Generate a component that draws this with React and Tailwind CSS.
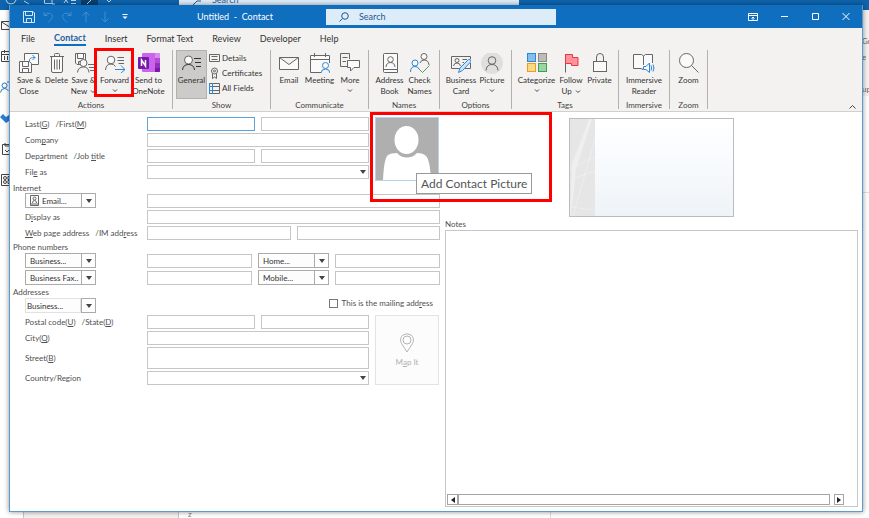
import React from "react";

const INK = "#666666";
const BLUE = "#2b88d8";

function Icon({ children, size = "h-5 w-5", box = "0 0 20 20", className = "" }) {
  return (
    <svg viewBox={box} className={`${size} shrink-0 ${className}`} fill="none" stroke={INK} strokeWidth="1" aria-hidden="true">
      {children}
    </svg>
  );
}

const icons = {
  saveClose: (
    <Icon>
      <path d="M5.5 7.500V.500H19.500V11.500H13" fill="#fafafa" />
      <path d="M10.500 8C10.500 5 12 4.500 16 4.500M13.500 2L16 4.500L13.500 7" stroke={BLUE} />
      <path d="M.500 8.500H10.500L12.500 10.500V19.500H.500Z" fill="#fafafa" />
      <path d="M3.500 8.500V13.500H9.500V8.500M3.500 19.500V15.500H9.500V19.500" />
    </Icon>
  ),
  trash: (
    <Icon>
      <path d="M4.500 3.500V18Q4.500 19.500 6 19.500H14Q15.500 19.500 15.500 18V3.500" fill="#fafafa" />
      <path d="M3 3.500H17M7.500 3.500V1.500Q7.500 .500 8.500 .500H11.500Q12.500 .500 12.500 1.500V3.500M7.500 6.500V16.500M10 6.500V16.500M12.500 6.500V16.500" />
    </Icon>
  ),
  saveNew: (
    <Icon>
      <path d="M1.500 .500H11.500V8M6 11.500H3L1.500 10V.500" fill="#fafafa" />
      <path d="M3.500 .500V5.500H9.500V.500M4.500 11.500V8.500H7" />
      <circle cx="9.500" cy="10" r="3.500" fill="#fafafa" />
      <path d="M3.500 19.500Q4 14 9.500 14Q14.500 14 15 19.500M14 11.500H20M15 14.500H20M16 17.500H20" />
    </Icon>
  ),
  forward: (
    <Icon>
      <circle cx="6" cy="7" r="3.800" fill="#fafafa" />
      <path d="M.500 17Q1 11 6 11Q9 11 10.500 13.500M12.500 4.500H19M12.500 7.500H19M13.500 10.500H19" />
      <path d="M10 16.500H20M16 12.500L20 16.500L16 20" stroke={BLUE} />
    </Icon>
  ),
  oneNote: (
    <Icon size="h-5 w-[22px]" box="0 0 22 20">
      <g stroke="none">
        <rect x="4" y="0" width="18" height="19" rx="1" fill="#ca64ea" />
        <path d="M17 0H21Q22 0 22 1V5H17Z" fill="#d98cf0" />
        <path d="M17 5H22V10H17Z" fill="#b14bd8" />
        <path d="M17 10H22V14.500H17Z" fill="#9332bf" />
        <path d="M17 14.500H22V18Q22 19 21 19H17Z" fill="#7719aa" />
        <rect x="0" y="4" width="11" height="12" rx="1" fill="#7719aa" />
      </g>
      <path d="M3.500 13V7L7.500 13V7" stroke="#fff" strokeWidth="1.500" />
    </Icon>
  ),
  general: (
    <Icon>
      <circle cx="6.500" cy="7" r="4" fill="#fafafa" />
      <path d="M.500 17Q1 11.500 6.500 11.500Q12 11.500 12.500 17M12 5.500H19M13 9.500H19M14 13.500H19" stroke="#333" />
    </Icon>
  ),
  envelope: (
    <Icon>
      <path d="M.500 4.500H19.500V16.500H.500ZM.500 4.500L10 11.500L19.500 4.500" fill="#fafafa" />
    </Icon>
  ),
  meeting: (
    <Icon>
      <path d="M.500 2.500H19.500V19.500H.500Z" fill="#fafafa" />
      <path d="M.500 6.500H19.500M4.500 0V4M15.500 0V4" />
      <path d="M11 20H20V10H11Z" fill="#f3f2f1" stroke="none" />
      <g stroke={BLUE}>
        <circle cx="15.500" cy="12.500" r="3" fill="#fafafa" />
        <path d="M11 20Q11.500 16 15.500 16Q19.500 16 20 20" />
      </g>
    </Icon>
  ),
  more: (
    <Icon>
      <path d="M8 13.500H.500V.500H9.500V6M2.500 4.500H7.500M2.500 8.500H6" />
      <path d="M7.500 7.500H19.500V14.500H14L10.500 18V14.500H7.500Z" fill="#fafafa" />
    </Icon>
  ),
  addressBook: (
    <Icon>
      <path d="M3.500 1.500Q3.500 .500 4.500 .500H17.500V19.500H4.500Q3.500 19.500 3.500 18.500ZM3.500 16.500H17.500" fill="#fafafa" />
      <circle cx="10.500" cy="6.500" r="2.800" />
      <path d="M6 14Q6.500 9.500 10.500 9.500Q14.500 9.500 15 14" />
    </Icon>
  ),
  checkNames: (
    <Icon>
      <circle cx="14" cy="3.500" r="3" fill="#fafafa" />
      <path d="M10 10Q11 7 14 7Q18.500 7 19 12" />
      <g stroke={BLUE}>
        <circle cx="5" cy="10" r="3" fill="#fafafa" />
        <path d="M.500 19Q.500 13.500 5 13.500Q8 13.500 9 16" />
      </g>
      <path d="M8.500 15.500L12.500 19.500L19.500 12.500" stroke="#4f9b63" />
    </Icon>
  ),
  businessCard: (
    <Icon>
      <path d="M9 15.500H.500V3.500H19.500V6M14 15.500H19.500V10" fill="none" />
      <circle cx="6" cy="7.500" r="2" />
      <path d="M2.500 13Q3 10 6 10Q9 10 9.500 13M11.500 6.500H16M11.500 9.500H13" />
      <path d="M7.500 19.500L9 15L17.500 6.500Q19.500 5.500 20 8.500L11.500 17.500Z" stroke={BLUE} fill="#cfe5f7" />
    </Icon>
  ),
  picture: (
    <Icon size="h-[22px] w-[22px]" box="0 0 22 22">
      <circle cx="11" cy="10" r="11" fill="#e1dfdd" stroke="none" />
      <circle cx="11" cy="7.500" r="3.800" />
      <path d="M5 17.500Q5.500 11.500 11 11.500Q16.500 11.500 17 17.500" />
    </Icon>
  ),
  categorize: (
    <Icon>
      <rect x=".500" y=".500" width="8" height="8" fill="#83beec" stroke="#2b88d8" />
      <rect x="11.500" y=".500" width="8" height="8" fill="#bebbb8" stroke="#8a8886" />
      <rect x=".500" y="10.500" width="8" height="8" fill="#fad984" stroke="#ef9b1c" />
      <rect x="11.500" y="10.500" width="8" height="8" fill="#99d6a4" stroke="#3ea04f" />
    </Icon>
  ),
  flag: (
    <Icon>
      <path d="M4.500 1V19.500" />
      <path d="M4.500 1.500H11.500V4.500H17V12.500H10.500V10.500H4.500Z" fill="#ff9199" stroke="#e8383f" />
    </Icon>
  ),
  lock: (
    <Icon>
      <path d="M6.500 9V4Q6.500 .500 10 .500Q13.500 .500 13.500 4V9" />
      <rect x="3.500" y="8.500" width="13" height="10" fill="#fafafa" />
    </Icon>
  ),
  reader: (
    <Icon size="h-5 w-[22px]" box="0 0 22 20">
      <path d="M8 15.500H.500V1.500H8.500L10.500 3L12.500 1.500H19.500V10" fill="#fafafa" />
      <path d="M10.500 3V12M8 15.500L10 16.500" />
      <path d="M10.500 13.500H13L16.500 10V19.500L13 16.500H10.500Z" stroke={BLUE} fill="#fafafa" />
      <path d="M18 12.500Q19.500 15 18 17.500M20 11.500Q22 15 20 18.500" stroke={BLUE} />
    </Icon>
  ),
  zoom: (
    <Icon>
      <circle cx="7.500" cy="7.500" r="7" fill="#fafafa" />
      <path d="M12.500 12.500L19.500 19.500" />
    </Icon>
  ),
};

function Chevron({ className = "" }) {
  return (
    <svg viewBox="0 0 6 4" className={`inline-block h-1 w-[6px] ${className}`} fill="none" stroke="#444" aria-hidden="true">
      <path d="M1 .500L3 2.500L5 .500" />
    </svg>
  );
}

function Triangle({ className = "" }) {
  return (
    <svg viewBox="0 0 6 4" className={`h-1 w-[6px] ${className}`} aria-hidden="true">
      <path d="M0 0H6L3 4Z" fill="#444" />
    </svg>
  );
}

function RibbonButton({ icon, lines, width, drop, dropInline, active }) {
  return (
    <button
      type="button"
      className={`flex h-[49px] shrink-0 flex-col items-center pt-[3px] ${width} ${active ? "bg-[#cdcbc9] outline outline-1 -outline-offset-1 outline-[#b3b0ad]" : ""}`}
    >
      <span className="flex h-[22px] items-start justify-center">{icons[icon]}</span>
      {lines.map((line, i) => (
        <span key={line} className="block h-[11px] whitespace-nowrap leading-[11px]">
          {line}
          {dropInline && i === lines.length - 1 && <Chevron className="ml-[3px] align-middle" />}
        </span>
      ))}
      {drop && <Chevron className="mt-[3px]" />}
    </button>
  );
}

function Group({ label, width, children, className = "justify-center" }) {
  return (
    <section className={`flex h-[59px] shrink-0 flex-col border-r border-[#b3b0ad] ${width}`} aria-label={label}>
      <div className={`flex h-[50px] ${className}`}>{children}</div>
      <div className="pt-px text-center leading-[11px] text-[#444]">{label}</div>
    </section>
  );
}

function ShowItem({ children, label }) {
  return (
    <button type="button" className="flex h-[15px] items-center gap-[2px] whitespace-nowrap">
      <Icon size="h-3 w-[11px]" box="0 0 11 12">{children}</Icon>
      {label}
    </button>
  );
}

function Ribbon() {
  return (
    <div className="flex h-[62px] shrink-0 items-start border-b border-[#d2d0ce] bg-[#f3f2f1] text-[8px] text-[#333]">
      <Group label="Actions" width="w-[163px]" className="pl-[5px]">
        <RibbonButton icon="saveClose" lines={["Save &", "Close"]} width="w-[28px]" />
        <RibbonButton icon="trash" lines={["Delete"]} width="w-[27px]" />
        <RibbonButton icon="saveNew" lines={["Save &", "New"]} width="w-[27px]" dropInline />
        <RibbonButton icon="forward" lines={["Forward"]} width="w-[35px]" drop />
        <RibbonButton icon="oneNote" lines={["Send to", "OneNote"]} width="w-[33px]" />
      </Group>
      <Group label="Show" width="w-[98px]" className="gap-[2px] pl-[3px]">
        <RibbonButton icon="general" lines={["General"]} width="w-[31px]" active />
        <div className="flex flex-col">
          <ShowItem label="Details">
            <path d="M.500 2.500H10.500V9.500H.500ZM2.500 4.500H8.500M2.500 7.500H8.500" />
          </ShowItem>
          <ShowItem label="Certificates">
            <circle cx="5.500" cy="4" r="3" />
            <circle cx="5.500" cy="4" r="1" />
            <path d="M3.500 6.500V11.500L5.500 10L7.500 11.500V6.500" />
          </ShowItem>
          <ShowItem label="All Fields">
            <path d="M.500 1.500H10.500V11.500H.500ZM3.500 4.500H10.500M3.500 8.500H10.500" />
            <path d="M.500 1V12M3.500 1V12M.500 4.500H3.500M.500 8.500H3.500" stroke={BLUE} />
          </ShowItem>
        </div>
      </Group>
      <Group label="Communicate" width="w-[98px]">
        <RibbonButton icon="envelope" lines={["Email"]} width="w-[28px]" />
        <RibbonButton icon="meeting" lines={["Meeting"]} width="w-[33px]" />
        <RibbonButton icon="more" lines={["More"]} width="w-[28px]" drop />
      </Group>
      <Group label="Names" width="w-[71px]">
        <RibbonButton icon="addressBook" lines={["Address", "Book"]} width="w-[31px]" />
        <RibbonButton icon="checkNames" lines={["Check", "Names"]} width="w-[29px]" />
      </Group>
      <Group label="Options" width="w-[72px]">
        <RibbonButton icon="businessCard" lines={["Business", "Card"]} width="w-[33px]" />
        <RibbonButton icon="picture" lines={["Picture"]} width="w-[29px]" drop />
      </Group>
      <Group label="Tags" width="w-[107px]">
        <RibbonButton icon="categorize" lines={["Categorize"]} width="w-[41px]" drop />
        <RibbonButton icon="flag" lines={["Follow", "Up"]} width="w-[28px]" dropInline />
        <RibbonButton icon="lock" lines={["Private"]} width="w-[29px]" />
      </Group>
      <Group label="Immersive" width="w-[51px]">
        <RibbonButton icon="reader" lines={["Immersive", "Reader"]} width="w-[40px]" />
      </Group>
      <Group label="Zoom" width="w-[38px]">
        <RibbonButton icon="zoom" lines={["Zoom"]} width="w-[29px]" />
      </Group>
      <button type="button" aria-label="Collapse ribbon" className="ml-auto self-end px-[6px] pb-[2px]">
        <svg viewBox="0 0 7 4" className="h-1 w-[7px]" fill="none" stroke="#444"><path d="M.500 3.500L3.500 .500L6.500 3.500" /></svg>
      </button>
    </div>
  );
}

function TitleBar() {
  return (
    <header className="flex h-[23px] shrink-0 items-center bg-[#106ebe] text-[9px] text-white">
      <div className="flex w-[187px] shrink-0 items-center gap-[7px] pl-[13px]">
        <button type="button" aria-label="Save">
          <svg viewBox="0 0 12 12" className="h-3 w-3" fill="none" stroke="#d6e8f7"><path d="M.500 .500H10L11.500 2V11.500H.500ZM2.500 .500V4.500H9.500V.500M3.500 11.500V7.500H8.500V11.500" /></svg>
        </button>
        <button type="button" aria-label="Undo">
          <svg viewBox="0 0 12 12" className="h-3 w-3" fill="none" stroke="#3f8fd2"><path d="M2 1V4.500H5.500M2 4.500Q5 1 8.500 2.500Q12 5 9 8.500L6 11.500" /></svg>
        </button>
        <button type="button" aria-label="Redo">
          <svg viewBox="0 0 12 12" className="h-3 w-3" fill="none" stroke="#3f8fd2"><path d="M10 1V4.500H6.500M10 4.500Q7 1 3.500 2.500Q0 5 3 8.500L6 11.500" /></svg>
        </button>
        <button type="button" aria-label="Previous item">
          <svg viewBox="0 0 12 12" className="h-3 w-3" fill="none" stroke="#3f8fd2"><path d="M6 11.500V1M2.500 4.500L6 1L9.500 4.500" /></svg>
        </button>
        <button type="button" aria-label="Next item">
          <svg viewBox="0 0 12 12" className="h-3 w-3" fill="none" stroke="#3f8fd2"><path d="M6 .500V11M2.500 7.500L6 11L9.500 7.500" /></svg>
        </button>
        <button type="button" aria-label="Customize toolbar" className="pl-[4px]">
          <svg viewBox="0 0 6 6" className="h-[6px] w-[6px]" fill="#fff"><path d="M.500 0H5.500V1H.500ZM.500 2.500H5.500L3 5Z" /></svg>
        </button>
      </div>
      <h1 className="w-[129px] shrink-0 whitespace-pre">Untitled  -  Contact</h1>
      <label className="flex h-4 w-[230px] shrink-0 items-center gap-[10px] bg-[#deecf9] pl-[13px]">
        <svg viewBox="0 0 10 10" className="h-[10px] w-[10px]" fill="none" stroke="#1b5a94"><circle cx="6" cy="4" r="3.300" /><path d="M3.500 6.500L.500 9.500" /></svg>
        <input type="search" aria-label="Search" placeholder="Search" className="w-40 bg-transparent text-[9px] text-[#1b5a94] outline-none placeholder:text-[#1b5a94]" />
      </label>
      <div className="ml-auto flex items-center gap-[21px] pr-[11px]">
        <button type="button" aria-label="Ribbon display options">
          <svg viewBox="0 0 10 10" className="h-[10px] w-[10px]" fill="none" stroke="#fff"><path d="M.500 1.500H9.500V8.500H.500ZM.500 3.500H9.500M5 8V5M3.500 6.500L5 5L6.500 6.500" /></svg>
        </button>
        <button type="button" aria-label="Minimize">
          <svg viewBox="0 0 10 10" className="h-[10px] w-[10px]" stroke="#fff"><path d="M2 4.500H9" /></svg>
        </button>
        <button type="button" aria-label="Maximize">
          <svg viewBox="0 0 10 10" className="h-[10px] w-[10px]" fill="none" stroke="#fff"><path d="M2.500 1.500H8.500V7.500H2.500Z" /></svg>
        </button>
        <button type="button" aria-label="Close">
          <svg viewBox="0 0 10 10" className="h-[10px] w-[10px]" stroke="#fff"><path d="M1.500 1L8.500 8M8.500 1L1.500 8" /></svg>
        </button>
      </div>
    </header>
  );
}

function Tabs() {
  const tabs = ["File", "Contact", "Insert", "Format Text", "Review", "Developer", "Help"];
  return (
    <nav className="flex h-[22px] shrink-0 items-start gap-[19px] bg-[#f3f2f1] pl-[11px] pt-[4px] text-[9px] text-[#333]">
      {tabs.map((t) => (
        <button
          key={t}
          type="button"
          className={`h-[14px] whitespace-nowrap leading-3 ${t === "Contact" ? "border-b-2 border-[#106ebe] font-bold text-[#1f5f9e]" : ""}`}
        >
          {t}
        </button>
      ))}
    </nav>
  );
}

const field = "h-[14px] min-w-0 border border-[#c6c6c6] bg-white px-1 text-[8px] outline-none";

function Field({ id, label, className = "flex-1" }) {
  return <input id={id} type="text" aria-label={label} className={`${field} ${className}`} />;
}

function Row({ label, children, height = "h-[14px]" }) {
  return (
    <div className={`flex ${height}`}>
      <div className="flex w-[122px] shrink-0 items-center gap-[6px] whitespace-nowrap">{label}</div>
      <div className="flex min-w-0 flex-1 items-center gap-[6px]">{children}</div>
    </div>
  );
}

function Split({ text, icon, light }) {
  return (
    <div className="flex h-[15px] w-[71px] shrink-0 text-[#333]">
      <button
        type="button"
        className={`flex w-[56px] items-center gap-[3px] overflow-hidden whitespace-nowrap border bg-[#fdfdfd] ${light ? "border-[#e1e1e1] pl-px" : "border-r-0 border-[#ababab] pl-[4px]"}`}
      >
        {icon}
        {text}
      </button>
      <button type="button" aria-label={`${text} options`} className="flex flex-1 items-center justify-center border border-[#ababab] bg-white">
        <Triangle />
      </button>
    </div>
  );
}

function Combo({ id, label }) {
  return (
    <div className="relative flex min-w-0 flex-1">
      <select id={id} aria-label={label} defaultValue="" className={`${field} w-full appearance-none`}>
        <option value=""></option>
      </select>
      <Triangle className="pointer-events-none absolute right-[3px] top-[5px]" />
    </div>
  );
}

function ContactForm() {
  return (
    <form className="w-[430px] shrink-0 pl-[15px] pt-[5px] text-[8px] leading-[10px] text-[#505050]">
      <div className="flex gap-[6px]">
        <div className="flex w-[344px] flex-col gap-[2px]">
          <Row label={<><label htmlFor="last">Last(<u>G</u>)</label><label htmlFor="first">/First(<u>M</u>)</label></>}>
            <input id="last" type="text" className="h-[14px] min-w-0 flex-1 border border-[#5ba3dc] bg-white px-1 outline-none" />
            <Field id="first" label="First" />
          </Row>
          <Row label={<label htmlFor="company">Com<u>p</u>any</label>}>
            <Field id="company" label="Company" />
          </Row>
          <Row label={<><label htmlFor="dept">Dep<u>a</u>rtment</label><label htmlFor="job">/Job <u>t</u>itle</label></>}>
            <Field id="dept" label="Department" />
            <Field id="job" label="Job title" />
          </Row>
          <Row label={<label htmlFor="fileas">Fil<u>e</u> as</label>}>
            <Combo id="fileas" label="File as" />
          </Row>
        </div>
        <button type="button" aria-label="Add Contact Picture" className="h-16 w-16 border border-[#b5d3ea] bg-[#afafaf]">
          <svg viewBox="0 0 62 62" className="h-full w-full" fill="#fff">
            <ellipse cx="30.500" cy="22" rx="12" ry="14" />
            <path d="M7 62Q8 40 12 37Q15 35 21 35Q25 39.500 31 39.500Q37 39.500 41 35Q47 35 50 38Q54 42 55 62Z" />
          </svg>
        </button>
      </div>

      <h2 className="-ml-3 mt-[2px] leading-[10px]">Internet</h2>
      <div className="flex flex-col gap-[2px]">
        <Row
          height="h-[15px]"
          label={
            <Split
              text="Email..."
              icon={<Icon size="h-[11px] w-[9px]" box="0 0 9 11"><path d="M.500 .500H8.500V10.500H.500ZM.500 9H8.500" /><circle cx="4.500" cy="3.500" r="1.500" /><path d="M2.500 8Q2.500 5.500 4.500 5.500Q6.500 5.500 6.500 8" /></Icon>}
            />
          }
        >
          <Field label="Email address" />
        </Row>
        <Row label={<label htmlFor="display">D<u>i</u>splay as</label>}>
          <Field id="display" label="Display as" />
        </Row>
        <Row label={<><label htmlFor="web"><u>W</u>eb page address</label><label htmlFor="im">/IM add<u>r</u>ess</label></>}>
          <Field id="web" label="Web page address" />
          <Field id="im" label="IM address" />
        </Row>
      </div>

      <h2 className="-ml-3 mt-[2px] leading-[10px]">Phone numbers</h2>
      <div className="mt-px flex flex-col gap-[2px]">
        {[["Business...", "Home..."], ["Business Fax..", "Mobile..."]].map(([a, b]) => (
          <Row key={a} height="h-[15px]" label={<Split text={a} />}>
            <Field label={a} />
            <Split text={b} />
            <Field label={b} />
          </Row>
        ))}
      </div>

      <h2 className="-ml-3 mt-[2px] leading-[10px]">Addresses</h2>
      <div className="mt-px flex items-start justify-between pr-[7px]">
        <Split text="Business..." light />
        <label className="flex items-center gap-[4px]">
          <input type="checkbox" className="h-[9px] w-[9px] appearance-none border border-[#777] bg-white" />
          <span>This is the mailing add<u>r</u>ess</span>
        </label>
      </div>
      <div className="mt-[2px] flex gap-[6px]">
        <div className="flex w-[344px] flex-col gap-[2px]">
          <Row label={<><label htmlFor="postal">Postal code(<u>U</u>)</label><label htmlFor="state">/State(<u>D</u>)</label></>}>
            <Field id="postal" label="Postal code" />
            <Field id="state" label="State" />
          </Row>
          <Row label={<label htmlFor="city">City(<u>Q</u>)</label>}>
            <Field id="city" label="City" />
          </Row>
          <Row height="h-[22px]" label={<label htmlFor="street">Street(<u>B</u>)</label>}>
            <textarea id="street" className="h-[22px] min-w-0 flex-1 resize-none border border-[#c6c6c6] bg-white outline-none" />
          </Row>
          <Row label={<label htmlFor="country">Country/Region</label>}>
            <Combo id="country" label="Country/Region" />
          </Row>
        </div>
        <button type="button" className="flex w-16 flex-col items-center justify-center gap-[4px] border border-[#e3e3e3] bg-[#fcfcfc] text-[#b0b0b0]">
          <svg viewBox="0 0 14 20" className="h-5 w-[14px]" fill="none" stroke="#b5b5b5"><path d="M7 19L1.500 10.500Q-1 5 3 2Q7 -.500 11 2Q15 5 12.500 10.500Z" /><circle cx="7" cy="7" r="4" /></svg>
          <span>M<u>a</u>p It</span>
        </button>
      </div>
    </form>
  );
}

function CardPreview() {
  return (
    <div className="mx-auto flex h-[99px] w-[165px] shrink-0 border border-[#b9bdc1]">
      <svg viewBox="0 0 25 97" className="h-full w-[25px]" preserveAspectRatio="none" aria-hidden="true">
        <rect width="25" height="97" fill="#e6e6e6" />
        <path d="M2 45L19 0H22L6 50L1 97H0Z" fill="#efefef" />
        <path d="M0 50L25 38M0 61L25 52M3 97L25 20M0 88L25 91" stroke="#eeeeee" />
      </svg>
      <div className="flex-1 bg-gradient-to-b from-white via-[#f7fafd] to-[#eef3f7]" />
    </div>
  );
}

function NotesPane() {
  return (
    <div className="flex min-w-0 flex-1 flex-col pb-[4px] pl-[5px] pr-[4px] pt-[6px]">
      <CardPreview />
      <label htmlFor="notes" className="mt-px text-[8px] leading-[12px] text-[#505050]">Notes</label>
      <div className="flex min-h-0 flex-1 flex-col border border-[#c3c7cb] bg-white">
        <textarea id="notes" className="min-h-0 w-full flex-1 resize-none p-1 text-[9px] outline-none" />
        <div className="mb-px ml-px mr-[13px] flex h-[11px]">
          <button type="button" aria-label="Scroll left" className="flex w-[11px] items-center justify-center border border-[#a5a5a5]">
            <svg viewBox="0 0 4 6" className="h-[6px] w-1"><path d="M4 0V6L0 3Z" fill="#222" /></svg>
          </button>
          <div className="mr-[4px] flex-1 border border-[#a5a5a5]" />
          <button type="button" aria-label="Scroll right" className="flex w-[10px] items-center justify-center border border-[#a5a5a5]">
            <svg viewBox="0 0 4 6" className="h-[6px] w-1"><path d="M0 0V6L4 3Z" fill="#222" /></svg>
          </button>
        </div>
      </div>
    </div>
  );
}

function MailWindowBehind() {
  return (
    <div className="flex min-h-screen flex-col overflow-hidden bg-white text-[9px]">
      <div className="flex h-[10px] shrink-0 overflow-hidden bg-[#0f64ad]">
        <svg viewBox="0 0 179 5" className="h-[5px] w-[179px] shrink-0" fill="none" stroke="#b9d8f1">
          <rect x="81" width="17" height="5" fill="#0b3f6d" stroke="none" />
          <path d="M6 0Q7 4 11 4Q15 4 16 0M24 1L29 4M44.500 0V3.500H53M52 0V4H55M64 3L66 0L68 3M71 .500H76M71 3.500H76M87 4L91 0M107 0L109 2L111 0" />
        </svg>
        <div className="flex h-[5px] w-[340px] shrink-0 gap-[10px] bg-[#deecf9] pl-[14px]">
          <svg viewBox="0 0 9 5" className="h-[5px] w-[9px]" fill="none" stroke="#1b5a94"><path d="M0 5L4 1H8" /></svg>
          <span className="-mt-[6px] leading-3 text-[#1b5a94]">Search</span>
        </div>
      </div>
      <div className="flex flex-1">
        <div className="flex w-[9px] shrink-0 flex-col gap-[19px] pt-[9px]">
          <svg viewBox="0 0 9 12" className="h-3 w-[9px]" fill="none" stroke="#444"><path d="M9 2.500H1.500V10.500H9M1.500 3L9 7.500" /></svg>
          <svg viewBox="0 0 9 12" className="h-3 w-[9px]" fill="none" stroke="#444"><path d="M9 1.500H1.500V11.500H9M1.500 4.500H9M4.500 0V3M4.500 6V10M7.500 6V10" /></svg>
          <svg viewBox="0 0 9 12" className="h-3 w-[9px]" fill="none" stroke="#1f78c8"><circle cx="4.500" cy="4.500" r="2.500" /><path d="M.500 11.500Q1 7.500 4.500 7.500Q7 7.500 8.500 10M7 1H9" /></svg>
          <svg viewBox="0 0 9 12" className="h-3 w-[9px]"><path d="M0 5L3 2L6 5L9 3V9L6 11Z" fill="#2b7cd3" /></svg>
          <svg viewBox="0 0 9 12" className="h-3 w-[9px]" fill="none" stroke="#444"><path d="M9 1.500H2.500V11.500H9M5 0V3H9M5 7L7 9L9 7" /></svg>
          <svg viewBox="0 0 9 12" className="h-3 w-[9px]" fill="none" stroke="#444"><path d="M9 .500H1.500V11.500H9" /><circle cx="5" cy="4" r="1.500" /><circle cx="5" cy="8" r="1.500" /><path d="M9 2.500H8V5.500H9M9 6.500H8V9.500H9" /></svg>
        </div>
        <div className="flex flex-1 items-end">
          <div className="ml-[14px] h-2 w-[156px] border-x border-[#c8c6c4] bg-[#f3f2f1]" />
          <span className="h-[8px] w-[372px] border-r border-[#e1dfdd] pl-[9px] text-[8px] leading-[8px] text-[#777]">z</span>
        </div>
        <div className="w-[9px] shrink-0 overflow-hidden whitespace-nowrap text-[8px] text-[#666]">
          <div className="h-[86px] bg-[#f3f2f1] pl-[2px] pt-[23px] leading-4">
            <div>Gro</div>
            <div>e</div>
            <div className="mt-[16px]">up</div>
          </div>
          <div className="h-[97px] border-b border-[#e1dfdd]" />
        </div>
      </div>
    </div>
  );
}

export default function App() {
  return (
    <div className="relative min-h-screen overflow-hidden font-[Lato,'Open_Sans',sans-serif]">
      <MailWindowBehind />
      <main className="absolute bottom-[6px] left-[9px] right-[6px] top-[5px] flex flex-col border border-t-0 border-[#5b9bd0] bg-white shadow-[0_0_5px_rgba(0,0,0,0.45)]">
        <TitleBar />
        <Tabs />
        <Ribbon />
        <div className="flex min-h-0 flex-1">
          <ContactForm />
          <NotesPane />
        </div>
        <div className="pointer-events-none absolute left-[84px] top-[43px] h-[49px] w-[40px] border-[3px] border-[#fe0000]" />
        <div className="pointer-events-none absolute left-[360px] top-[107px] h-[90px] w-[182px] border-[3px] border-[#fe0000]" />
        <div role="tooltip" className="absolute left-[406px] top-[168px] h-[21px] whitespace-nowrap border border-[#999] bg-white px-[4px] text-[12px] leading-[19px] text-[#555]">
          Add Contact Picture
        </div>
      </main>
    </div>
  );
}
